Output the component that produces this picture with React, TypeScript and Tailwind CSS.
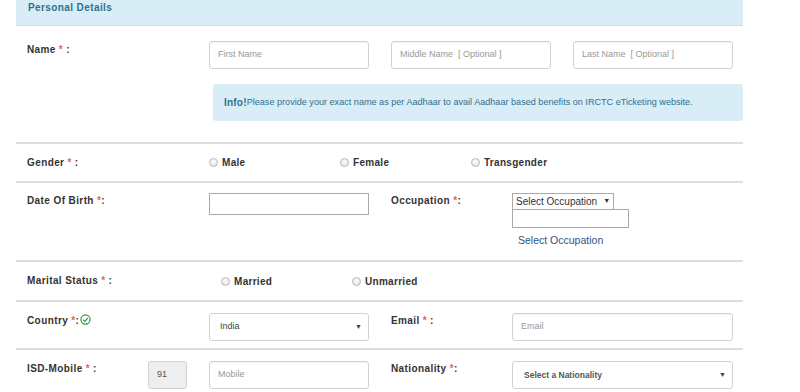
import React from "react";

const F = { fontFamily: '"Liberation Sans", Arial, sans-serif' } as React.CSSProperties;

function Star({ tight }: { tight?: boolean }) {
  return <span className={`text-[#e8615c] ${tight ? "" : "mx-[3px]"}`}>*</span>;
}

function Label({ children }: { children: React.ReactNode }) {
  return (
    <div className="text-[10px] font-bold tracking-[0.4px] text-[#333] leading-[14px]">
      {children}
    </div>
  );
}

function Radio({ text }: { text: string }) {
  return (
    <div className="flex items-center">
      <span className="inline-block w-[9px] h-[9px] rounded-full border border-[#b9b9b9] bg-[radial-gradient(circle_at_50%_40%,#ffffff_0%,#e6e6e6_70%,#d0d0d0_100%)]" />
      <span className="ml-[4px] text-[10px] font-bold tracking-[0.3px] text-[#333]">{text}</span>
    </div>
  );
}

function TextBox({ ph, w = "w-[160px]" }: { ph: string; w?: string }) {
  return (
    <div className={`${w} h-[28px] border border-[#d2d2d2] rounded-[3px] shadow-[inset_0_1px_1px_rgba(0,0,0,0.06)] flex items-center pl-[8px] text-[9px] text-[#999] whitespace-pre`}>
      {ph}
    </div>
  );
}

function Divider() {
  return <div className="h-[2px] bg-[#dedede]" />;
}

export default function App() {
  return (
    <div className="w-[800px] h-[392px] bg-white overflow-hidden" style={F}>
      <div className="ml-[16px] w-[727px]">
        {/* Heading */}
        <div className="h-[26px] bg-[#d9edf7] border-b border-[#c6e2ee] pl-[12px] pt-[1px]">
          <div className="text-[10px] font-bold tracking-[0.4px] leading-[13px] text-[#31708f]">Personal Details</div>
        </div>

        {/* Name */}
        <div className="h-[116px] pt-[15px]">
          <div className="flex">
            <div className="w-[193px] pl-[11px] pt-[2px]">
              <Label>
                Name<Star />:
              </Label>
            </div>
            <div className="flex gap-[22px]">
              <TextBox ph="First Name" />
              <TextBox ph="Middle Name  [ Optional ]" />
              <TextBox ph="Last Name  [ Optional ]" />
            </div>
          </div>
          <div className="ml-[197px] mt-[15px] w-[530px] h-[37px] rounded-[3px] bg-[#d9edf7] pl-[11px] flex items-center text-[9.1px] text-[#31708f]">
            <span className="font-bold text-[10px] tracking-[0.2px]">Info!</span>
            <span>Please provide your exact name as per Aadhaar to avail Aadhaar based benefits on IRCTC eTicketing website.</span>
          </div>
        </div>

        <Divider />

        {/* Gender */}
        <div className="h-[37px] flex items-center">
          <div className="w-[193px] pl-[11px]">
            <Label>
              Gender<Star />:
            </Label>
          </div>
          <div className="w-[131px]"><Radio text="Male" /></div>
          <div className="w-[131px]"><Radio text="Female" /></div>
          <div><Radio text="Transgender" /></div>
        </div>

        <Divider />

        {/* DOB */}
        <div className="h-[77px] pt-[10px] flex items-start">
          <div className="w-[193px] pl-[11px] pt-[1px]">
            <Label>
              Date Of Birth <Star tight />:
            </Label>
          </div>
          <div className="w-[160px] h-[22px] border border-[#a9a9a9]" />
          <div className="ml-[22px] w-[121px] pt-[1px]">
            <Label>
              Occupation <Star tight />:
            </Label>
          </div>
          <div className="flex flex-col">
            <div className="w-[102px] h-[17px] border border-[#a9a9a9] bg-white flex items-center pl-[3px] text-[10px] text-[#333]">
              Select Occupation
              <span className="ml-[6px] text-[7px]">▼</span>
            </div>
            <div className="w-[117px] h-[19px] border border-[#a9a9a9] -mt-[1px]" />
            <div className="mt-[5px] ml-[6px] text-[10.5px] leading-[14px] text-[#2d5382]">Select Occupation</div>
          </div>
        </div>

        <Divider />

        {/* Marital */}
        <div className="h-[38px] flex items-center">
          <div className="w-[205px] pl-[11px]">
            <Label>
              Marital Status<Star />:
            </Label>
          </div>
          <div className="w-[131px]"><Radio text="Married" /></div>
          <div><Radio text="Unmarried" /></div>
        </div>

        <Divider />

        {/* Country */}
        <div className="h-[46px] pt-[11px] flex items-start">
          <div className="w-[193px] pl-[11px] pt-[1px]">
            <Label>
              Country <Star tight />:
              <svg width="11" height="11" viewBox="0 0 12 12" className="inline-block align-[-1px] ml-[1px]">
                <circle cx="6" cy="6" r="5" fill="none" stroke="#2e9a3e" strokeWidth="1.3" />
                <path d="M3.4 6.2 L5.3 8 L8.6 4.3" fill="none" stroke="#2e9a3e" strokeWidth="1.3" />
              </svg>
            </Label>
          </div>
          <div className="w-[160px] h-[28px] border border-[#d2d2d2] rounded-[3px] flex items-center justify-between pl-[10px] pr-[6px] text-[9px] text-[#444]">
            <span>India</span>
            <span className="text-[7px]">▼</span>
          </div>
          <div className="ml-[22px] w-[121px] pt-[1px]">
            <Label>
              Email<Star />:
            </Label>
          </div>
          <TextBox ph="Email" w="w-[221px]" />
        </div>

        <Divider />

        {/* ISD */}
        <div className="pt-[11px] flex items-start">
          <div className="w-[193px] flex">
            <div className="w-[132px] pl-[11px] pt-[1px]">
              <Label>
                ISD-Mobile<Star />:
              </Label>
            </div>
            <div className="w-[39px] h-[28px] border border-[#d2d2d2] rounded-[3px] bg-[#eeeeee] flex items-center pl-[8px] text-[9px] text-[#555]">
              91
            </div>
          </div>
          <TextBox ph="Mobile" />
          <div className="ml-[22px] w-[121px] pt-[1px]">
            <Label>
              Nationality <Star tight />:
            </Label>
          </div>
          <div className="w-[221px] h-[28px] border border-[#d2d2d2] rounded-[3px] flex items-center justify-between pl-[11px] pr-[6px] text-[8.5px] font-bold text-[#555]">
            <span>Select a Nationality</span>
            <span className="text-[7px] font-normal text-[#444]">▼</span>
          </div>
        </div>
      </div>
    </div>
  );
}
